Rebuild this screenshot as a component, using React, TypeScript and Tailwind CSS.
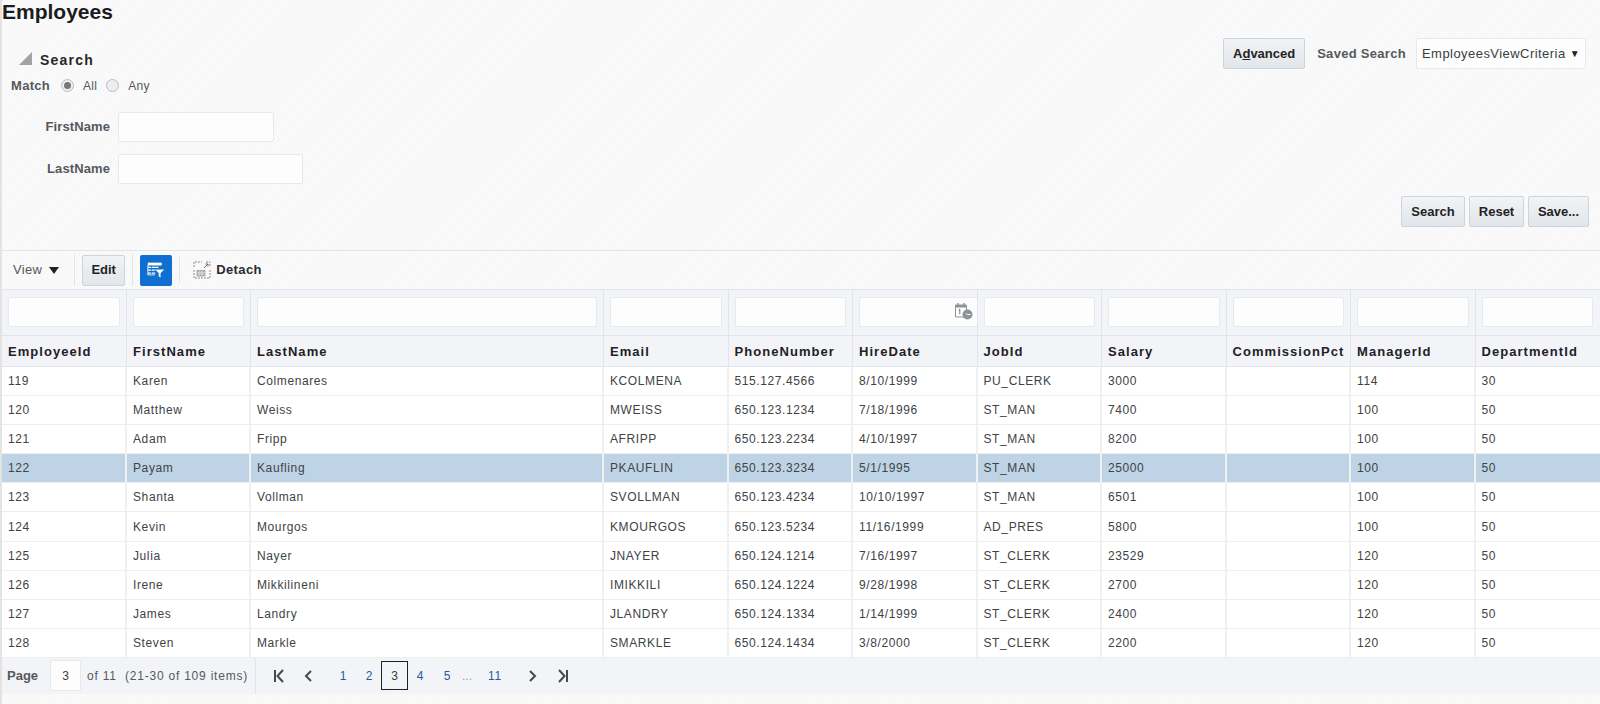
const columns = ["EmployeeId", "FirstName", "LastName", "Email", "PhoneNumber", "HireDate", "JobId", "Salary", "CommissionPct", "ManagerId", "DepartmentId"];

const rows = [
  ["119", "Karen", "Colmenares", "KCOLMENA", "515.127.4566", "8/10/1999", "PU_CLERK", "3000", "", "114", "30"],
  ["120", "Matthew", "Weiss", "MWEISS", "650.123.1234", "7/18/1996", "ST_MAN", "7400", "", "100", "50"],
  ["121", "Adam", "Fripp", "AFRIPP", "650.123.2234", "4/10/1997", "ST_MAN", "8200", "", "100", "50"],
  ["122", "Payam", "Kaufling", "PKAUFLIN", "650.123.3234", "5/1/1995", "ST_MAN", "25000", "", "100", "50"],
  ["123", "Shanta", "Vollman", "SVOLLMAN", "650.123.4234", "10/10/1997", "ST_MAN", "6501", "", "100", "50"],
  ["124", "Kevin", "Mourgos", "KMOURGOS", "650.123.5234", "11/16/1999", "AD_PRES", "5800", "", "100", "50"],
  ["125", "Julia", "Nayer", "JNAYER", "650.124.1214", "7/16/1997", "ST_CLERK", "23529", "", "120", "50"],
  ["126", "Irene", "Mikkilineni", "IMIKKILI", "650.124.1224", "9/28/1998", "ST_CLERK", "2700", "", "120", "50"],
  ["127", "James", "Landry", "JLANDRY", "650.124.1334", "1/14/1999", "ST_CLERK", "2400", "", "120", "50"],
  ["128", "Steven", "Markle", "SMARKLE", "650.124.1434", "3/8/2000", "ST_CLERK", "2200", "", "120", "50"],
];

const gridCols = "grid grid-cols-[125px_124px_353px_124.5px_124.5px_124.5px_124.5px_124.5px_124.5px_124.5px_123.5px]";

function TextBox({ className }: { className: string }) {
  return <div className={"bg-[#fdfdfe] border border-[#e6e9ed] rounded-[2px] " + className} />;
}

function Button({ children, className }: { children: React.ReactNode; className: string }) {
  return (
    <button className={"h-[31px] flex items-center justify-center rounded-[2px] border border-[#c9d6e0] bg-gradient-to-b from-[#f1f3f5] to-[#e2e6ea] font-bold text-[13px] text-[#1f2326] " + className}>
      {children}
    </button>
  );
}

function Radio({ checked }: { checked?: boolean }) {
  return (
    <span className="w-[13px] h-[13px] rounded-full border border-[#b9bdc1] bg-[#eceef0] flex items-center justify-center">
      {checked && <span className="w-[7px] h-[7px] rounded-full bg-[#75797d]" />}
    </span>
  );
}

function FilterIcon() {
  return (
    <svg width="20" height="18" viewBox="0 0 24 22" fill="none">
      <path d="M2 2h17v3.500H2z" fill="#fff" />
      <path d="M2 7h13v1.500H2zM2 10.500h9v1.500H2zM2 14h9v1.500H2z" fill="#fff" />
      <path d="M2 5v12h9" stroke="#fff" strokeWidth="1" />
      <path d="M6.500 5v11" stroke="#0f6fd0" strokeWidth="0.8" />
      <path d="M10.500 10h12l-4.600 5v5.500l-2.800-1.700V15z" fill="#fff" stroke="#0f6fd0" strokeWidth="0.6" />
    </svg>
  );
}

function DetachIcon() {
  return (
    <svg width="18" height="18" viewBox="0 0 18 18" fill="none">
      <path d="M1 6V1h8M1 9v8h16V9M13 1h4v4" stroke="#8a8d90" strokeWidth="1" strokeDasharray="2 1" />
      <path d="M11 7l4-4M12.500 3H15v2.500" stroke="#6f7378" strokeWidth="1" />
      <path d="M4 9.500h8V15H4z" fill="#b4b7ba" stroke="#85888c" strokeWidth="0.6" />
      <path d="M4 11.500h8M4 13.200h8M6.600 9.500V15M9.300 9.500V15" stroke="#e9eaeb" strokeWidth="0.5" />
    </svg>
  );
}

function CalendarIcon() {
  return (
    <svg width="19" height="18" viewBox="0 0 19 18" fill="none">
      <path d="M1.500 3h11v12h-11z" stroke="#8e9296" strokeWidth="1" fill="#fdfdfe" />
      <path d="M1.500 3h11v2.500h-11z" fill="#8e9296" />
      <path d="M4 1v3M10 1v3" stroke="#8e9296" strokeWidth="1.400" />
      <path d="M4.600 8l1.200-.8v5" stroke="#6f7378" strokeWidth="1" />
      <circle cx="13.500" cy="12.500" r="5" fill="#8e9296" />
      <path d="M13.500 12.500h3M13.500 12.500l-1.500-1" stroke="#fff" strokeWidth="1" />
    </svg>
  );
}

function PageArrow({ d }: { d: string }) {
  return (
    <svg width="12" height="14" viewBox="0 0 12 14" fill="none">
      <path d={d} stroke="#45494d" strokeWidth="2" />
    </svg>
  );
}

export default function App() {
  return (
    <div className="h-[704px] w-[1600px] overflow-hidden border-l-2 border-[#e3e3e3] bg-[#f8f8f8] bg-[repeating-linear-gradient(135deg,#f6f6f6_0px,#f6f6f6_1px,#fafafa_1px,#fafafa_3px)] font-['Liberation_Sans',Arial,sans-serif] text-[12px] text-[#3a3d40]">
      <div className="h-[251px] border-b border-[#dfe5eb] relative">
        <h1 className="h-[25px] leading-[24px] font-bold text-[21px] text-[#1a1c1e]">Employees</h1>

        <div className="flex justify-between pr-[14px]">
          <div className="pt-[23px]">
            <div className="h-[25px] flex items-center pl-[17px]">
              <svg width="13" height="13" viewBox="0 0 13 13" className="-mt-[4px]">
                <path d="M13 0v13H0z" fill="#a0a4a8" />
              </svg>
              <span className="ml-[8px] font-bold text-[14px] tracking-[1.2px] text-[#26282b]">Search</span>
            </div>
            <div className="h-[25px] flex items-center pl-[9px]">
              <span className="font-bold text-[13px] tracking-[0.3px] text-[#55595d] mr-[11px]">Match</span>
              <Radio checked />
              <span className="ml-[9px] tracking-[0.3px] text-[#55595d]">All</span>
              <span className="ml-[9px]"><Radio /></span>
              <span className="ml-[9px] tracking-[0.3px] text-[#55595d]">Any</span>
            </div>
            <div className="flex items-center mt-[14px] h-[30px]">
              <span className="w-[116px] pr-[8px] text-right font-bold text-[13px] tracking-[0.1px] text-[#55595d]">FirstName</span>
              <TextBox className="w-[156px] h-[30px]" />
            </div>
            <div className="flex items-center mt-[12px] h-[30px]">
              <span className="w-[116px] pr-[8px] text-right font-bold text-[13px] tracking-[0.1px] text-[#55595d]">LastName</span>
              <TextBox className="w-[185px] h-[30px]" />
            </div>
          </div>

          <div className="flex items-center h-[31px] mt-[13px]">
            <Button className="w-[82px]">
              <span>A<span className="underline">d</span>vanced</span>
            </Button>
            <span className="ml-[12px] font-bold text-[13px] tracking-[0.3px] text-[#55595d]">Saved Search</span>
            <div className="ml-[10px] w-[170px] h-[31px] bg-[#fdfdfe] border border-[#e6e9ed] rounded-[2px] flex items-center justify-between pl-[5px] pr-[5px] text-[13px] tracking-[0.45px] text-[#3a3d40]">
              <span>EmployeesViewCriteria</span>
              <span className="text-[10px] text-[#222]">▼</span>
            </div>
          </div>
        </div>

        <div className="absolute right-[11px] top-[196px] flex gap-[4px]">
          <Button className="w-[64px]">Search</Button>
          <Button className="w-[55px]">Reset</Button>
          <Button className="w-[61px]">Save...</Button>
        </div>
      </div>

      <div className="h-[38px] flex items-center">
        <span className="ml-[11px] text-[13px] tracking-[0.3px] text-[#55595d]">View</span>
        <svg width="10" height="7" viewBox="0 0 10 7" className="ml-[7px]">
          <path d="M0 0h10L5 7z" fill="#1f2124" />
        </svg>
        <span className="ml-[15px] w-px h-[32px] bg-[#dfe5eb]" />
        <Button className="ml-[7px] w-[43px]">Edit</Button>
        <span className="ml-[7px] w-px h-[32px] bg-[#dfe5eb]" />
        <span className="ml-[7px] w-[32px] h-[31px] rounded-[2px] bg-[#0f6fd0] flex items-center justify-center">
          <FilterIcon />
        </span>
        <span className="ml-[7px] w-px h-[26px] bg-[#dfe5eb]" />
        <span className="ml-[13px]"><DetachIcon /></span>
        <span className="ml-[5px] font-bold text-[13px] tracking-[0.4px] text-[#2a2c2f]">Detach</span>
      </div>

      <div className="border-t border-[#dfe5eb]">
        <div className={gridCols + " h-[45px] bg-[#f2f4f8]"}>
          {columns.map((name) => (
            <div key={name} className="border-r border-[#dfe5eb] last:border-r-0 pl-[6px] pr-[6px] pt-[7px] relative overflow-hidden">
              {name === "HireDate" ? (
                <div className="relative h-[30px]">
                  <TextBox className="w-[140px] h-[30px]" />
                  <span className="absolute right-[-2px] top-[5px]"><CalendarIcon /></span>
                </div>
              ) : (
                <TextBox className="h-[30px]" />
              )}
            </div>
          ))}
        </div>
        <div className={gridCols + " h-[32px] bg-[#f2f4f8] border-y border-[#dfe5eb]"}>
          {columns.map((name) => (
            <div key={name} className="border-r border-[#dfe5eb] last:border-r-0 pl-[6px] pt-[1px] flex items-center font-bold text-[13px] tracking-[1.05px] text-[#1f2124]">
              {name}
            </div>
          ))}
        </div>
        {rows.map((row) => (
          <div key={row[0]} className={gridCols + " h-[29.1px] border-b border-[#eeeeee] " + (row[0] === "122" ? "bg-[#bed3e5]" : "bg-white")}>
            {row.map((cell, i) => (
              <div key={i} className="border-r-2 border-[#f0f0f0] last:border-r-0 pl-[6px] flex items-center text-[12px] tracking-[0.6px] text-[#404346] whitespace-nowrap overflow-hidden">
                {cell}
              </div>
            ))}
          </div>
        ))}
        <div className="h-[36px] bg-[#f2f4f8] flex items-center">
          <span className="ml-[5px] font-bold text-[13px] text-[#55595d]">Page</span>
          <div className="ml-[12px] w-[31px] h-[31px] bg-[#fdfdfe] border border-[#e6e9ed] rounded-[2px] flex items-center justify-center">3</div>
          <span className="ml-[6px] tracking-[0.78px] text-[#55595d] whitespace-pre">of 11  (21-30 of 109 items)</span>
          <span className="ml-[7px] w-px h-[36px] bg-[#dfe5eb]" />
          <span className="ml-[17px]"><PageArrow d="M2 1v12M10 1L4.500 7l5.500 6" /></span>
          <span className="ml-[17px]"><PageArrow d="M9 2L4 7l5 5" /></span>
          <a className="ml-[24px] w-[10px] text-center text-[#2a5a9c]">1</a>
          <a className="ml-[16px] w-[10px] text-center text-[#2a5a9c]">2</a>
          <span className="ml-[7px] w-[27px] h-[29px] border border-[#1f2124] flex items-center justify-center">3</span>
          <a className="ml-[7px] w-[10px] text-center text-[#2a5a9c]">4</a>
          <a className="ml-[17px] w-[10px] text-center text-[#2a5a9c]">5</a>
          <span className="ml-[10px] text-[#9a9da0]">...</span>
          <a className="ml-[16px] text-[#2a5a9c] tracking-[0.6px]">11</a>
          <span className="ml-[25px]"><PageArrow d="M3 2l5 5-5 5" /></span>
          <span className="ml-[18px]"><PageArrow d="M10 1v12M2 1l5.500 6L2 13" /></span>
        </div>
      </div>
    </div>
  );
}
